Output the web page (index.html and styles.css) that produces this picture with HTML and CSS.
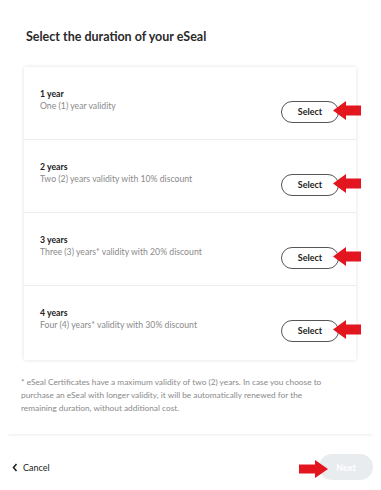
FILE: index.html
```html
<!DOCTYPE html>
<html>
<head>
<meta charset="utf-8">
<link rel="stylesheet" href="styles.css">
</head>
<body>
<div class="card">
  <h1 class="title">Select the duration of your eSeal</h1>
  <div class="list">
    <div class="row">
      <div class="info">
        <div class="name">1 year</div>
        <div class="desc">One (1) year validity</div>
      </div>
      <div class="btn-wrap">
        <button class="select">Select</button>
        <svg class="arrow-left" width="28" height="19" viewBox="0 0 28 19"><polygon points="0,9.5 13,0 13,4.5 28,4.5 28,14.5 13,14.5 13,19" fill="#e3161f"/></svg>
      </div>
    </div>
    <div class="row">
      <div class="info">
        <div class="name">2 years</div>
        <div class="desc">Two (2) years validity with 10% discount</div>
      </div>
      <div class="btn-wrap">
        <button class="select">Select</button>
        <svg class="arrow-left" width="28" height="19" viewBox="0 0 28 19"><polygon points="0,9.5 13,0 13,4.5 28,4.5 28,14.5 13,14.5 13,19" fill="#e3161f"/></svg>
      </div>
    </div>
    <div class="row">
      <div class="info">
        <div class="name">3 years</div>
        <div class="desc">Three (3) years* validity with 20% discount</div>
      </div>
      <div class="btn-wrap">
        <button class="select">Select</button>
        <svg class="arrow-left" width="28" height="19" viewBox="0 0 28 19"><polygon points="0,9.5 13,0 13,4.5 28,4.5 28,14.5 13,14.5 13,19" fill="#e3161f"/></svg>
      </div>
    </div>
    <div class="row">
      <div class="info">
        <div class="name">4 years</div>
        <div class="desc">Four (4) years* validity with 30% discount</div>
      </div>
      <div class="btn-wrap">
        <button class="select">Select</button>
        <svg class="arrow-left" width="28" height="19" viewBox="0 0 28 19"><polygon points="0,9.5 13,0 13,4.5 28,4.5 28,14.5 13,14.5 13,19" fill="#e3161f"/></svg>
      </div>
    </div>
  </div>
  <p class="note">* eSeal Certificates have a maximum validity of two (2) years. In case you choose to<br>purchase an eSeal with longer validity, it will be automatically renewed for the<br>remaining duration, without additional cost.</p>
</div>
<div class="footer">
  <a class="cancel"><svg class="chev" width="6" height="9" viewBox="0 0 6 9"><polyline points="4.5,1 1.5,4.5 4.5,8" fill="none" stroke="#222" stroke-width="1.6"/></svg>Cancel</a>
  <div class="next-wrap">
    <svg class="arrow-right" width="29" height="18" viewBox="0 0 29 18"><polygon points="29,9 16,0 16,4.5 0,4.5 0,13.5 16,13.5 16,18" fill="#e3161f"/></svg>
    <button class="next">Next</button>
  </div>
</div>
</body>
</html>
```

FILE: styles.css
```css
* { box-sizing: border-box; }
body {
  margin: 8px;
  background: #fff;
  font-family: Lato, "Open Sans", sans-serif;
  color: #222;
}
.card {
  width: 365px;
  background: #fff;
  box-shadow: 0 0 4px rgba(0,0,0,0.12);
  padding: 21px 16px 19px 16px;
}
.title {
  margin: 0 0 22px 0;
  padding-left: 2px;
  font-size: 12.5px;
  line-height: 16px;
  font-weight: 700;
  color: #2a2a2a;
}
.list {
  width: 332px;
  box-shadow: 0 0 4px rgba(0,0,0,0.12);
  background: #fff;
}
.row {
  display: flex;
  justify-content: space-between;
  align-items: flex-start;
  height: 73px;
  padding: 20px 17px 0 16px;
  border-bottom: 1px solid #ececec;
}
.row:last-child {
  border-bottom: none;
  height: 74px;
}
.name {
  font-size: 8.7px;
  line-height: 13px;
  font-weight: 700;
  color: #222;
}
.desc {
  font-size: 8.7px;
  line-height: 12px;
  color: #8a8a8a;
}
.btn-wrap {
  position: relative;
  margin-top: 12px;
}
.select {
  width: 58px;
  height: 22px;
  border: 1px solid #555;
  border-radius: 11px;
  background: #fff;
  font-family: Lato, sans-serif;
  font-size: 9px;
  font-weight: 700;
  color: #222;
  padding: 0;
}
.arrow-left {
  position: absolute;
  left: 52px;
  top: 2px;
}
.note {
  margin: 16px -3px 0 -3px;
  font-size: 8.3px;
  line-height: 13px;
  white-space: nowrap;
  color: #8a8a8a;
}
.footer {
  display: flex;
  justify-content: space-between;
  align-items: center;
  margin-top: 20px;
  width: 365px;
}
.cancel {
  display: flex;
  align-items: center;
  gap: 5px;
  padding-left: 4px;
  font-size: 9px;
  color: #222;
}
.next-wrap {
  position: relative;
  display: flex;
}
.next {
  width: 54px;
  height: 26px;
  border: none;
  border-radius: 13px;
  background: #e9ecef;
  color: #fff;
  font-family: Lato, sans-serif;
  font-size: 9px;
  font-weight: 700;
  padding: 0;
}
.arrow-right {
  position: absolute;
  left: -20px;
  top: 6px;
}
```
